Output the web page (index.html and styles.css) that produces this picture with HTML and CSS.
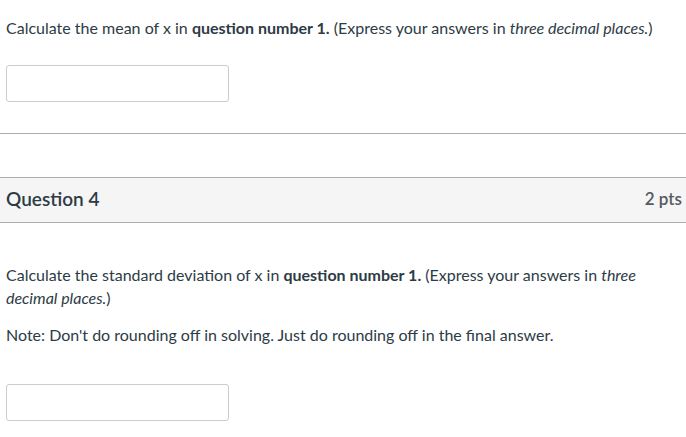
FILE: index.html
```html
<!DOCTYPE html>
<html>
<head>
<meta charset="utf-8">
<link rel="stylesheet" href="styles.css">
</head>
<body>
<div class="prev-question">
  <p class="qtext">Calculate the mean of x in <strong>question number 1.</strong> (Express your answers in <em>three decimal places.</em>)</p>
  <div class="answer"><input class="answer-input" type="text"></div>
</div>
<div class="divider"></div>
<div class="question">
  <div class="q-header">
    <span class="q-name">Question 4</span>
    <span class="q-pts">2 pts</span>
  </div>
  <div class="q-body">
    <p class="qtext">Calculate the standard deviation of x in <strong>question number 1.</strong> (Express your answers in <em>three decimal places.</em>)</p>
    <p class="qtext note">Note: Don't do rounding off in solving. Just do rounding off in the final answer.</p>
    <div class="answer second"><input class="answer-input" type="text"></div>
  </div>
</div>
</body>
</html>
```

FILE: styles.css
```css
html, body {
  margin: 0;
  padding: 0;
  background: #ffffff;
}
body {
  font-family: Lato, "Open Sans", "Liberation Sans", sans-serif;
  font-size: 16px;
  color: #2d3b45;
  padding-top: 17px;
}
.qtext {
  margin: 0;
  padding: 0 6px;
  line-height: 22px;
}
.qtext strong {
  font-weight: 700;
}
.answer {
  padding: 0 6px;
  margin-top: 26px;
}
.answer-input {
  display: block;
  box-sizing: border-box;
  width: 223px;
  height: 37px;
  margin: 0;
  border: 1px solid #c7cdd1;
  border-radius: 3px;
  background: #fff;
}
.divider {
  margin-top: 31px;
  border-top: 1px solid #adadad;
}
.question {
  margin-top: 43px;
}
.q-header {
  display: flex;
  justify-content: space-between;
  align-items: center;
  box-sizing: border-box;
  height: 46px;
  padding: 0 4px 4px 6px;
  background: #f5f5f5;
  border-top: 1px solid #adadad;
  border-bottom: 1px solid #adadad;
}
.q-name {
  font-size: 19px;
  font-weight: 600;
  color: #2d3b45;
}
.q-pts {
  font-size: 17px;
  font-weight: 600;
  color: #555a5e;
}
.q-body {
  padding-top: 40px;
}
.q-body .qtext {
  line-height: 23px;
  padding-right: 40px;
}
.q-body .note {
  margin-top: 14px;
}
.answer.second {
  margin-top: 38px;
}
```
